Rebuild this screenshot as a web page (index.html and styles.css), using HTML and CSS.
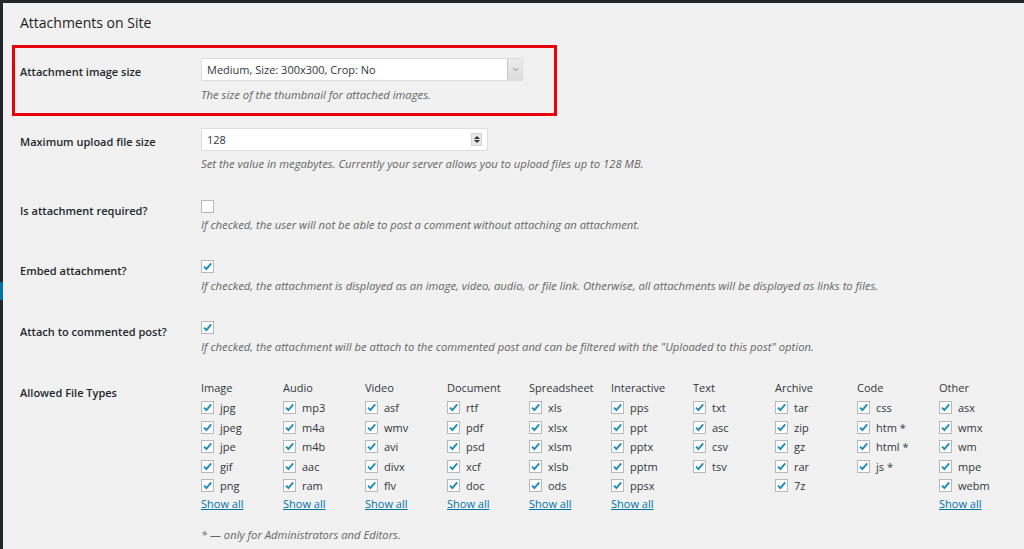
FILE: index.html
```html
<!DOCTYPE html>
<html>
<head>
<meta charset="utf-8">
<link rel="stylesheet" href="styles.css">
</head>
<body>
<div class="topbar"></div>
<div class="frame">
  <div class="sidebar"></div>
  <div class="main">
    <h2 class="title">Attachments on Site</h2>

    <div class="highlight">
      <div class="row">
        <div class="label l-field">Attachment image size</div>
        <div class="field">
          <div class="select">
            <span class="select-text">Medium, Size: 300x300, Crop: No</span>
            <span class="select-arrow"><svg width="7" height="5" viewBox="0 0 7 5"><path d="M1 1.2 L3.5 3.6 L6 1.2" fill="none" stroke="#888" stroke-width="1"/></svg></span>
          </div>
          <p class="desc d-select">The size of the thumbnail for attached images.</p>
        </div>
      </div>
    </div>

    <div class="row row-input">
      <div class="label l-field">Maximum upload file size</div>
      <div class="field">
        <div class="number">
          <span class="number-text">128</span>
          <span class="spinner"><span class="tri-up"></span><span class="tri-down"></span></span>
        </div>
        <p class="desc d-input">Set the value in megabytes. Currently your server allows you to upload files up to 128 MB.</p>
      </div>
    </div>

    <div class="row row-check">
      <div class="label l-check">Is attachment required?</div>
      <div class="field">
        <span class="cb"></span>
        <p class="desc d-check">If checked, the user will not be able to post a comment without attaching an attachment.</p>
      </div>
    </div>

    <div class="row row-check">
      <div class="label l-check">Embed attachment?</div>
      <div class="field">
        <span class="cb"><svg width="11" height="11" viewBox="0 0 11 11"><path d="M2 5.6 L4.4 8 L9.2 2.4" fill="none" stroke="#1e8cbe" stroke-width="1.9"/></svg></span>
        <p class="desc d-check2">If checked, the attachment is displayed as an image, video, audio, or file link. Otherwise, all attachments will be displayed as links to files.</p>
      </div>
    </div>

    <div class="row row-check row-last">
      <div class="label l-check">Attach to commented post?</div>
      <div class="field">
        <span class="cb"><svg width="11" height="11" viewBox="0 0 11 11"><path d="M2 5.6 L4.4 8 L9.2 2.4" fill="none" stroke="#1e8cbe" stroke-width="1.9"/></svg></span>
        <p class="desc d-check2">If checked, the attachment will be attach to the commented post and can be filtered with the "Uploaded to this post" option.</p>
      </div>
    </div>

    <div class="row">
      <div class="label l-types">Allowed File Types</div>
      <div class="field">
        <div class="types" id="types"></div>
        <p class="desc footnote">* — only for Administrators and Editors.</p>
      </div>
    </div>
  </div>
</div>
<script src="app.js"></script>
</body>
</html>
```
FILE: app.js
```js
const groups = [
  ["Image", ["jpg","jpeg","jpe","gif","png"], true],
  ["Audio", ["mp3","m4a","m4b","aac","ram"], true],
  ["Video", ["asf","wmv","avi","divx","flv"], true],
  ["Document", ["rtf","pdf","psd","xcf","doc"], true],
  ["Spreadsheet", ["xls","xlsx","xlsm","xlsb","ods"], true],
  ["Interactive", ["pps","ppt","pptx","pptm","ppsx"], true],
  ["Text", ["txt","asc","csv","tsv"], false],
  ["Archive", ["tar","zip","gz","rar","7z"], false],
  ["Code", ["css","htm *","html *","js *"], false],
  ["Other", ["asx","wmx","wm","mpe","webm"], true]
];
const tick = '<svg width="11" height="11" viewBox="0 0 11 11"><path d="M2 5.6 L4.4 8 L9.2 2.4" fill="none" stroke="#1e8cbe" stroke-width="1.9"/></svg>';
const root = document.getElementById('types');
groups.forEach(([name, items, more]) => {
  const col = document.createElement('div');
  col.className = 'type-col';
  let html = '<div class="type-head">' + name + '</div><div class="type-items">';
  items.forEach(i => {
    html += '<div class="type-item"><span class="cb cb-small">' + tick + '</span><span>' + i + '</span></div>';
  });
  html += '</div>';
  if (more) html += '<a class="show-all" href="#">Show all</a>';
  col.innerHTML = html;
  root.appendChild(col);
});
```
FILE: styles.css
```css
* { box-sizing: border-box; }
html, body { margin: 0; padding: 0; }
body {
  background: #f1f1f1;
  font-family: "Open Sans", "Noto Sans", sans-serif;
  color: #23282d;
  width: 1024px;
  height: 549px;
  overflow: hidden;
}
.topbar { height: 3px; background: #23282d; }
.frame { display: flex; height: 546px; }
.sidebar {
  width: 3px;
  flex: none;
  background: linear-gradient(#23282d 0 279px, #0073aa 279px 297px, #23282d 297px);
}
.main { flex: 1; padding-left: 17px; }
.title {
  margin: 0;
  padding-top: 10px;
  height: 30px;
  line-height: 20px;
  font-size: 14px;
  font-weight: 400;
  color: #1d2125;
  margin-bottom: 12px;
}
.highlight {
  margin-left: -8px;
  width: 545px;
  border: 3px solid #e8000d;
  padding: 10px 0 11px 5px;
  margin-bottom: 12px;
}
.row {
  display: grid;
  grid-template-columns: 181px 1fr;
}
.row-input { padding-bottom: 29px; }
.row-check { padding-bottom: 28px; }
.row-last { padding-bottom: 26px; }
.label {
  font-size: 11px;
  font-weight: 600;
  line-height: 16px;
  color: #23282d;
}
.l-field { padding-top: 6px; }
.l-check { padding-top: 3px; }
.l-types { padding-top: 5px; }
.field { min-width: 0; }
.select {
  width: 322px;
  height: 23px;
  background: #fff;
  border: 1px solid #ddd;
  display: flex;
  align-items: center;
  justify-content: space-between;
  padding-left: 5px;
}
.select-text, .number-text {
  font-size: 11px;
  color: #32373c;
}
.select-arrow {
  width: 15px;
  height: 21px;
  background: linear-gradient(#ececec, #dcdcdc);
  border-left: 1px solid #c8c8c8;
  display: flex;
  align-items: center;
  justify-content: center;
}
.number {
  width: 287px;
  height: 23px;
  background: #fff;
  border: 1px solid #ddd;
  display: flex;
  align-items: center;
  justify-content: space-between;
  padding: 0 5px 0 5px;
}
.spinner {
  width: 11px;
  height: 13px;
  background: #e8e8e8;
  border: 1px solid #d4d4d4;
  display: flex;
  flex-direction: column;
  align-items: center;
  justify-content: center;
  gap: 1px;
}
.tri-up {
  width: 0; height: 0;
  border-left: 3px solid transparent;
  border-right: 3px solid transparent;
  border-bottom: 3px solid #333;
}
.tri-down {
  width: 0; height: 0;
  border-left: 3px solid transparent;
  border-right: 3px solid transparent;
  border-top: 3px solid #333;
}
.desc {
  margin: 0;
  font-size: 11.25px;
  font-style: italic;
  line-height: 14px;
  color: #666;
  white-space: nowrap;
}
.d-select { margin-top: 7px; }
.d-input { margin-top: 6px; }
.d-check { margin-top: 5px; }
.d-check2 { margin-top: 6px; }
.cb {
  display: flex;
  align-items: center;
  justify-content: center;
  width: 13px;
  height: 13px;
  background: #fff;
  border: 1px solid #b4b9be;
}
.types {
  display: grid;
  grid-template-columns: repeat(10, 82px);
}
.type-head {
  font-size: 11px;
  line-height: 16px;
  color: #32373c;
  margin-bottom: 2px;
}
.type-item {
  display: flex;
  align-items: center;
  gap: 6px;
  height: 19.5px;
  font-size: 11px;
  color: #32373c;
}
.type-items { min-height: 97.5px; }
.show-all {
  display: block;
  font-size: 11px;
  line-height: 16px;
  color: #0073aa;
  text-decoration: underline;
}
.footnote { margin-top: 15px; line-height: 16px; }
```
